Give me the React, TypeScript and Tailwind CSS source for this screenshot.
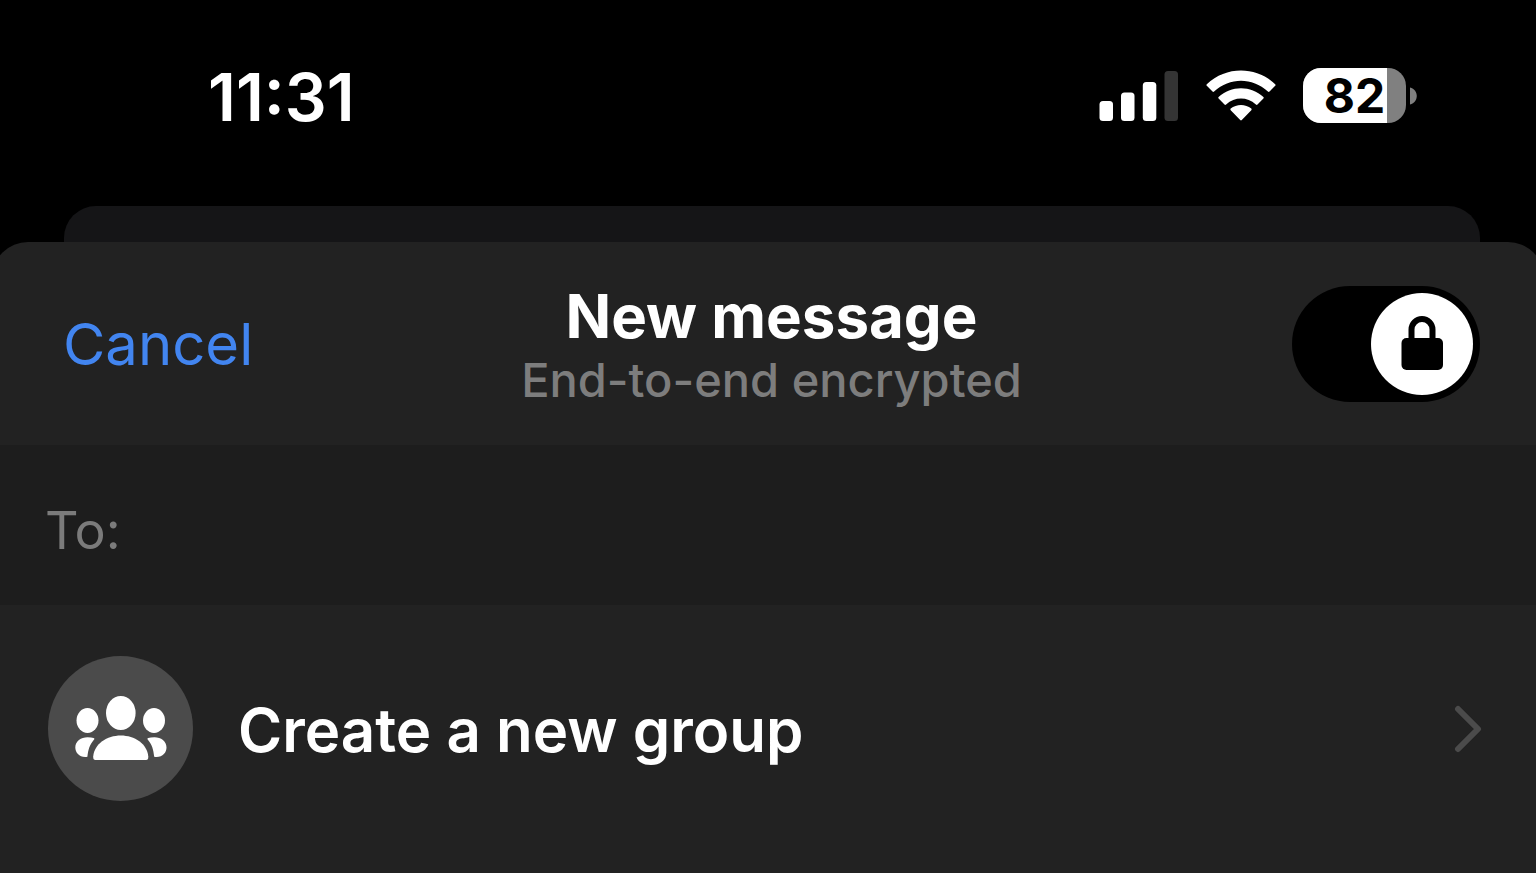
import { useState } from "react";

function SignalIcon() {
  return (
    <svg width="80" height="50" viewBox="0 0 80 50" fill="#fff" aria-hidden="true">
      <rect x="0.500" y="30" width="13.500" height="20" rx="3.500" />
      <rect x="22" y="21.500" width="13.500" height="28.500" rx="3.500" />
      <rect x="43.800" y="11" width="13.500" height="39" rx="3.500" />
      <rect x="65.500" y="0" width="13.500" height="50" rx="3.500" fill="#343434" />
    </svg>
  );
}

function WifiIcon() {
  return (
    <svg width="70" height="52" viewBox="0 0 70 52" fill="#fff" aria-hidden="true">
      <path d="M0.800 15.800 Q0 15 0.800 14.200 C20 -4 50 -4 69.200 14.200 Q70 15 69.200 15.800 L63.500 21.500 Q62.700 22.300 61.900 21.500 C46 7.200 24 7.200 8.100 21.500 Q7.300 22.300 6.500 21.500 Z" />
      <path d="M12.600 28.600 Q11.800 27.800 12.600 27 C25 15.200 45 15.200 57.400 27 Q58.200 27.800 57.400 28.600 L51.500 34.500 Q50.700 35.300 49.900 34.500 C41 26.600 29 26.600 20.100 34.500 Q19.300 35.300 18.500 34.500 Z" />
      <path d="M24.700 40.200 Q23.900 39.400 24.700 38.600 C30.500 33.700 39.500 33.700 45.300 38.600 Q46.100 39.400 45.300 40.200 L35.800 50.100 Q35 50.900 34.200 50.100 Z" />
    </svg>
  );
}

function Battery({ level }: { level: number }) {
  return (
    <div className="flex items-center gap-1" role="img" aria-label="Battery">
      <div className="relative flex h-[55px] w-[103px] items-center justify-center rounded-[18px] bg-[#808080]">
        <div className="absolute inset-y-0 left-0 rounded-l-[18px] bg-white" style={{ width: `${level}%` }} />
        <span className="relative text-5xl leading-none font-bold text-black">{level}</span>
      </div>
      <svg width="7" height="18" viewBox="0 0 7 18" fill="#808080" aria-hidden="true">
        <path d="M0 0.500 C9 3 9 15 0 17.500 Z" />
      </svg>
    </div>
  );
}

function LockIcon() {
  return (
    <svg width="42" height="54" viewBox="0 0 42 54" aria-hidden="true">
      <rect x="0.500" y="22" width="41.500" height="32" rx="5" fill="#000" />
      <path d="M10.500 25 V13.500 a10.500 10.500 0 0 1 21 0 V25" fill="none" stroke="#000" strokeWidth="6" />
    </svg>
  );
}

function GroupIcon() {
  return (
    <svg width="92" height="66" viewBox="0 0 92 66" fill="#fff" aria-hidden="true">
      <ellipse cx="45.800" cy="17" rx="14.800" ry="17" />
      <ellipse cx="12.500" cy="24.500" rx="11" ry="12.500" />
      <ellipse cx="79" cy="24.500" rx="11" ry="12.500" />
      <path d="M20.500 64 Q18 64 18.200 60.500 C19.200 48 32 39.500 45.800 39.500 S72.300 48 73.300 60.500 Q73.500 64 71 64 Z" />
      <path d="M19.300 43.300 C14.300 49.500 13.300 53.500 12.400 60.800 C5 62 0.300 57 0.300 51.500 C0.300 45 6 41.200 12.500 41.200 Q16.500 41.200 18.600 41.900 Q19.800 42.400 19.300 43.300 Z" />
      <path d="M72.500 43.300 C77.500 49.500 78.300 53.500 79.200 60.800 C87 62 91.500 57 91.500 51.500 C91.500 45 86 41.200 79.500 41.200 Q75.500 41.200 73.200 41.900 Q72 42.400 72.500 43.300 Z" />
    </svg>
  );
}

function ChevronIcon() {
  return (
    <svg width="28" height="48" viewBox="0 0 28 48" fill="none" stroke="#4b4b4b" strokeWidth="6" strokeLinecap="round" strokeLinejoin="round" aria-hidden="true">
      <path d="M4 4 L24 24 L4 44" />
    </svg>
  );
}

export default function App() {
  const [encrypted, setEncrypted] = useState(true);

  return (
    <div className="flex min-h-screen flex-col overflow-hidden bg-black font-['Inter',sans-serif] text-white">
      <div className="flex h-[206px] items-center justify-between pr-[119px] pb-[15px] pl-[208px]">
        <time className="pt-0.5 text-[66px] leading-none font-semibold">11:31</time>
        <div className="flex items-center gap-[27px]">
          <SignalIcon />
          <WifiIcon />
          <Battery level={82} />
        </div>
      </div>

      <div className="mr-14 ml-16 h-9 rounded-t-[32px] bg-[#151517]" />

      <main className="-mx-2 flex grow flex-col rounded-t-[36px] bg-[#222222]">
        <header className="grid h-[203px] grid-cols-[1fr_auto_1fr] items-center pr-16 pl-[71px]">
          <button type="button" className="justify-self-start text-[58px] leading-none text-[#4285f0]">
            Cancel
          </button>
          <div className="flex flex-col items-center pt-1">
            <h1 className="text-[60px] leading-[68px] font-bold">New message</h1>
            <p className="text-[47px] leading-[60px] font-medium text-[#7d7d7d]">End-to-end encrypted</p>
          </div>
          <label className="relative block h-[116px] w-[188px] cursor-pointer justify-self-end">
            <input
              type="checkbox"
              role="switch"
              aria-label="End-to-end encryption"
              checked={encrypted}
              onChange={(e) => setEncrypted(e.target.checked)}
              className="peer block size-full appearance-none rounded-full bg-black"
            />
            <span className="pointer-events-none absolute top-[7px] left-[7px] flex size-[102px] items-center justify-center rounded-full bg-white pb-0.5 peer-checked:right-[7px] peer-checked:left-auto">
              <LockIcon />
            </span>
          </label>
        </header>

        <div className="flex h-40 items-center gap-4 bg-[#1d1d1d] px-[53px] pt-3">
          <label htmlFor="recipient" className="text-[52px] leading-none text-[#7b7b7b]">
            To:
          </label>
          <input id="recipient" type="text" className="h-20 min-w-0 grow bg-transparent text-[52px] outline-none" />
        </div>

        <button type="button" className="flex items-center gap-[45px] py-[51px] pr-[62px] pl-14 text-left">
          <span className="flex size-[145px] shrink-0 items-center justify-center rounded-full bg-[#4b4b4b]">
            <GroupIcon />
          </span>
          <span className="grow pt-0.5 text-[60px] leading-none font-semibold">Create a new group</span>
          <ChevronIcon />
        </button>
      </main>
    </div>
  );
}
